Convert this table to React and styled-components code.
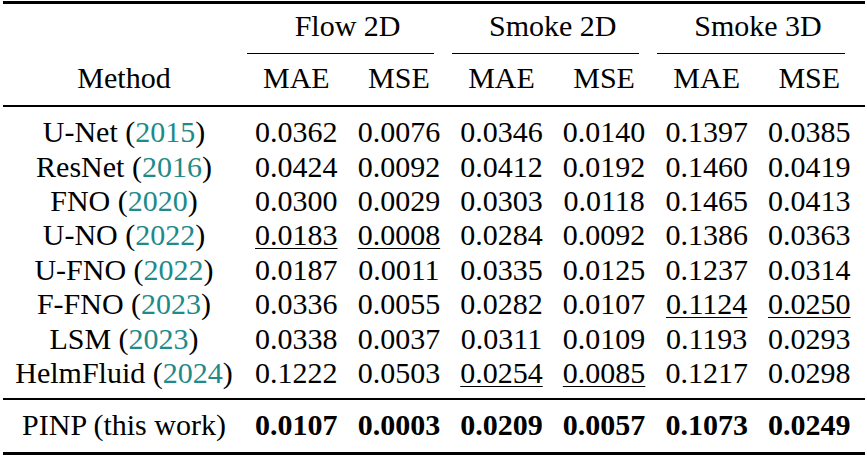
import React from 'react';
import styled, { createGlobalStyle } from 'styled-components';

const GlobalStyle = createGlobalStyle`
  body {
    margin: 0;
    background: #fff;
  }
`

const COLS = '242px repeat(6, 102.6px)';

const Sheet = styled.div`
  margin: 1px 0 0 3px;
  width: 862px;
  font-family: "Liberation Serif", "Times New Roman", serif;
  font-size: 30px;
  color: #000;
`

const Rule = styled.div`
  height: 0;
  border-top: ${p => p.$w}px solid #000;
`

const Row = styled.div`
  display: grid;
  grid-template-columns: ${COLS};
  align-items: center;
  height: ${p => p.$h}px;
  padding-bottom: ${p => p.$pb || 0}px;
  box-sizing: border-box;
  font-weight: ${p => (p.$bold ? 700 : 400)};
`

const Body = styled.div`
  padding: 8px 0;
`

const Cell = styled.div`
  text-align: center;
  line-height: 1;
  white-space: nowrap;
`

const Group = styled(Cell)`
  grid-column: span 2;
`

const CmidRule = styled.div`
  grid-column: span 2;
  border-top: 1px solid #000;
  margin: 0 16px 0 2px;
`

const Value = styled.span`
  text-decoration: ${p => (p.$under ? 'underline' : 'none')};
  text-underline-offset: 3px;
  text-decoration-thickness: 1px;
`

const Year = styled.span`
  color: #1e8a8a;
`

const groups = ['Flow 2D', 'Smoke 2D', 'Smoke 3D'];

// fila: nombre, año, valores; "u" marca los segundos mejores (subrayados)
const rows = [
  { name: 'U-Net', year: '2015', vals: ['0.0362', '0.0076', '0.0346', '0.0140', '0.1397', '0.0385'] },
  { name: 'ResNet', year: '2016', vals: ['0.0424', '0.0092', '0.0412', '0.0192', '0.1460', '0.0419'] },
  { name: 'FNO', year: '2020', vals: ['0.0300', '0.0029', '0.0303', '0.0118', '0.1465', '0.0413'] },
  { name: 'U-NO', year: '2022', vals: ['0.0183', '0.0008', '0.0284', '0.0092', '0.1386', '0.0363'], u: [0, 1] },
  { name: 'U-FNO', year: '2022', vals: ['0.0187', '0.0011', '0.0335', '0.0125', '0.1237', '0.0314'] },
  { name: 'F-FNO', year: '2023', vals: ['0.0336', '0.0055', '0.0282', '0.0107', '0.1124', '0.0250'], u: [4, 5] },
  { name: 'LSM', year: '2023', vals: ['0.0338', '0.0037', '0.0311', '0.0109', '0.1193', '0.0293'] },
  { name: 'HelmFluid', year: '2024', vals: ['0.1222', '0.0503', '0.0254', '0.0085', '0.1217', '0.0298'], u: [2, 3] },
];

const ours = ['0.0107', '0.0003', '0.0209', '0.0057', '0.1073', '0.0249'];

const App = () => {
  return (
    <>
      <GlobalStyle />
      <Sheet>
        <Rule $w={3} />
        <Row $h={49} $pb={5}>
          <Cell />
          {groups.map(g => <Group key={g}>{g}</Group>)}
        </Row>
        <Row $h={1}>
          <div />
          {groups.map(g => <CmidRule key={g} />)}
        </Row>
        <Row $h={51} $pb={3}>
          <Cell>Method</Cell>
          {groups.map(g => (
            <React.Fragment key={g}>
              <Cell>MAE</Cell>
              <Cell>MSE</Cell>
            </React.Fragment>
          ))}
        </Row>
        <Rule $w={2} />
        <Body>
          {rows.map(r => (
            <Row $h={34.4} key={r.name}>
              <Cell>{r.name} (<Year>{r.year}</Year>)</Cell>
              {r.vals.map((v, i) => (
                <Cell key={i}>
                  <Value $under={r.u && r.u.includes(i)}>{v}</Value>
                </Cell>
              ))}
            </Row>
          ))}
        </Body>
        <Rule $w={2} />
        <Row $h={52} $pb={3}>
          <Cell>PINP (this work)</Cell>
          {ours.map((v, i) => <Cell key={i}><b>{v}</b></Cell>)}
        </Row>
        <Rule $w={3} />
      </Sheet>
    </>
  );
}

export default App;
